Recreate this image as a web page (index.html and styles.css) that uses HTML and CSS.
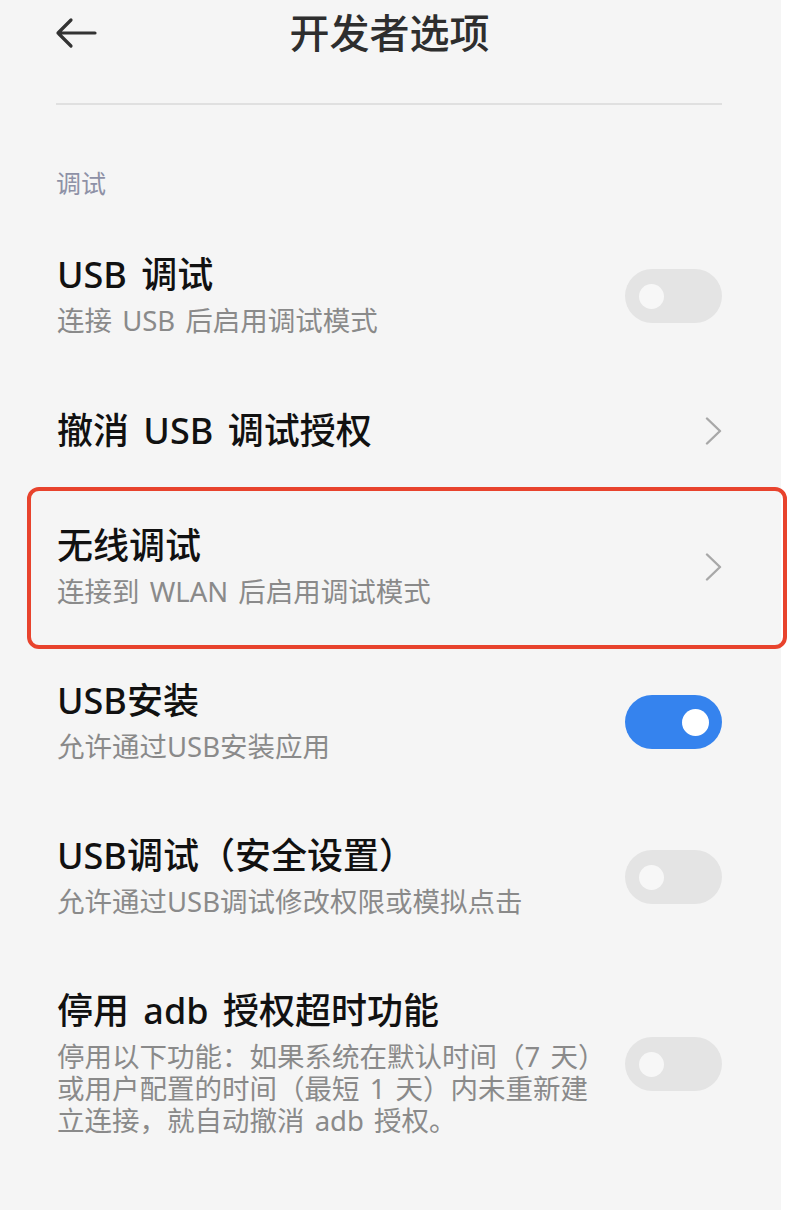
FILE: index.html
```html
<!DOCTYPE html>
<html lang="zh-CN">
<head>
    <meta charset="UTF-8">
    <meta name="viewport" content="width=device-width, initial-scale=1.0">
    <title>开发者选项</title>
    <link rel="stylesheet" href="styles.css">
</head>
<body>
    <div class="screen">
        <div class="topbar">
            <svg class="back" width="44" height="32" viewBox="0 0 44 32">
                <path d="M41 16H4 M17 3 L4 16 L17 29" fill="none" stroke="#333" stroke-width="3.2" stroke-linecap="round" stroke-linejoin="round"/>
            </svg>
            <h1>开发者选项</h1>
            <span></span>
        </div>
        <div class="divider"></div>
        <div class="section-label">调试</div>

        <div class="row">
            <div class="text">
                <div class="title">USB 调试</div>
                <div class="desc">连接 USB 后启用调试模式</div>
            </div>
            <div class="switch"><span class="knob"></span></div>
        </div>

        <div class="row single">
            <div class="text">
                <div class="title">撤消 USB 调试授权</div>
            </div>
            <svg class="chevron" width="18" height="28" viewBox="0 0 18 28">
                <polyline points="2,1.5 15,14 2,26.5" fill="none" stroke="#a8a8a8" stroke-width="2.4" stroke-linecap="round" stroke-linejoin="round"/>
            </svg>
        </div>

        <div class="row marked">
            <div class="text">
                <div class="title">无线调试</div>
                <div class="desc">连接到 WLAN 后启用调试模式</div>
            </div>
            <svg class="chevron" width="18" height="28" viewBox="0 0 18 28">
                <polyline points="2,1.5 15,14 2,26.5" fill="none" stroke="#a8a8a8" stroke-width="2.4" stroke-linecap="round" stroke-linejoin="round"/>
            </svg>
        </div>

        <div class="row">
            <div class="text">
                <div class="title">USB安装</div>
                <div class="desc">允许通过USB安装应用</div>
            </div>
            <div class="switch on"><span class="knob"></span></div>
        </div>

        <div class="row">
            <div class="text">
                <div class="title">USB调试（安全设置）</div>
                <div class="desc">允许通过USB调试修改权限或模拟点击</div>
            </div>
            <div class="switch"><span class="knob"></span></div>
        </div>

        <div class="row">
            <div class="text">
                <div class="title">停用 adb 授权超时功能</div>
                <div class="desc">停用以下功能：如果系统在默认时间（7 天）<br>或用户配置的时间（最短 1 天）内未重新建<br>立连接，就自动撤消 adb 授权。</div>
            </div>
            <div class="switch"><span class="knob"></span></div>
        </div>
    </div>
</body>
</html>
```

FILE: styles.css
```css
body {
    margin: 0;
    background-color: #ffffff;
    font-family: "Noto Sans", "Noto Sans CJK SC", sans-serif;
}
.screen {
    width: 781px;
    min-height: 1210px;
    background-color: #f5f5f5;
}
.topbar {
    height: 66px;
    display: grid;
    grid-template-columns: 1fr auto 1fr;
    align-items: center;
    padding: 0 56px 0 54px;
}
.back {
    display: block;
}
h1 {
    margin: 0;
    font-size: 40px;
    font-weight: 500;
    color: #2e2e2e;
    line-height: 66px;
}
.divider {
    height: 2px;
    margin: 37px 59px 0 56px;
    background-color: #e0e0e0;
}
.section-label {
    margin-top: 63px;
    padding-left: 56px;
    padding-bottom: 20px;
    font-size: 25px;
    line-height: 30px;
    color: #8e91a6;
}
.row {
    display: flex;
    align-items: center;
    padding: 32px 59px 31px 57px;
}
.row.single {
    padding: 33px 59px 33px 57px;
}
.text {
    flex: 1;
}
.title {
    font-size: 36px;
    line-height: 50px;
    font-weight: 500;
    color: #111111;
    word-spacing: 5px;
}
.desc {
    padding: 5px 0;
    font-size: 27.5px;
    line-height: 32px;
    color: #8a8a8a;
    word-spacing: 3px;
}
.switch {
    width: 97px;
    height: 54px;
    border-radius: 27px;
    background-color: #e4e4e4;
    display: flex;
    align-items: center;
    padding-left: 14px;
    box-sizing: border-box;
    flex-shrink: 0;
}
.switch .knob {
    width: 25px;
    height: 25px;
    border-radius: 50%;
    background-color: #f7f7f7;
}
.switch.on {
    background-color: #3583ee;
    justify-content: flex-end;
    padding-left: 0;
    padding-right: 13px;
}
.switch.on .knob {
    width: 27px;
    height: 27px;
    background-color: #ffffff;
}
.chevron {
    display: block;
    margin-right: -1px;
}
.marked {
    position: relative;
}
.marked::after {
    content: "";
    position: absolute;
    top: -2px;
    bottom: -5px;
    left: 27px;
    right: -6px;
    border: 4px solid #e8432d;
    border-radius: 12px;
}
```
